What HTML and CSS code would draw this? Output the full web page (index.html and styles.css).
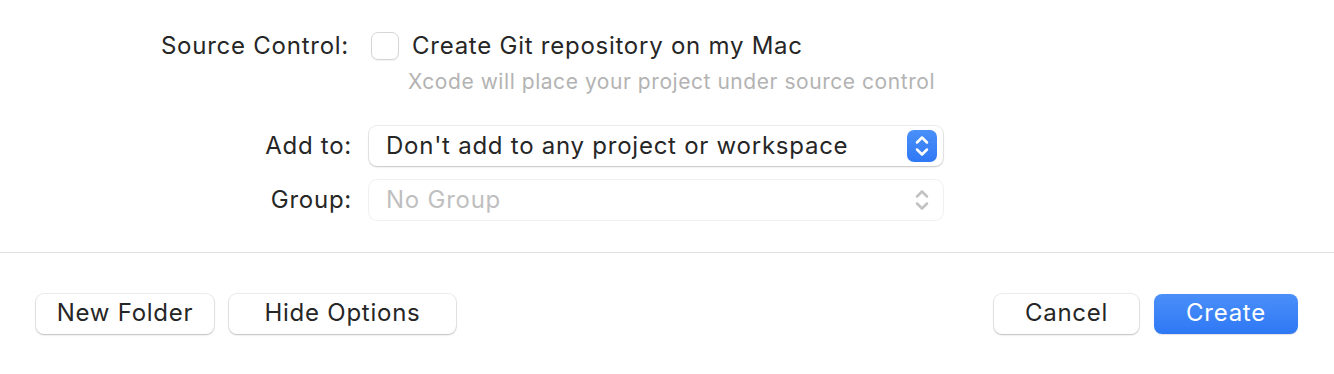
FILE: index.html
```html
<!DOCTYPE html>
<html lang="en">
<head>
<meta charset="utf-8">
<title>New Project Options</title>
<link rel="stylesheet" href="styles.css">
</head>
<body>
<div class="dialog">
  <section class="options">
    <div class="row row-source">
      <div class="label label-source">Source Control:</div>
      <label class="check">
        <span class="checkbox"></span>
        <span class="check-text">Create Git repository on my Mac</span>
      </label>
    </div>
    <div class="row row-hint">
      <div class="label"></div>
      <div class="hint">Xcode will place your project under source control</div>
    </div>
    <div class="row row-add">
      <div class="label">Add to:</div>
      <div class="popup">
        <span class="popup-text">Don't add to any project or workspace</span>
        <span class="stepper stepper-active">
          <svg width="14" height="24" viewBox="0 0 14 24"><path d="M2 8.5 L7 3.5 L12 8.5 M2 15.5 L7 20.5 L12 15.5" fill="none" stroke="#fff" stroke-width="2.5" stroke-linecap="round" stroke-linejoin="round"/></svg>
        </span>
      </div>
    </div>
    <div class="row row-group">
      <div class="label">Group:</div>
      <div class="popup popup-disabled">
        <span class="popup-text">No Group</span>
        <span class="stepper">
          <svg width="14" height="24" viewBox="0 0 14 24"><path d="M2 8.5 L7 3.5 L12 8.5 M2 15.5 L7 20.5 L12 15.5" fill="none" stroke="#c2c2c2" stroke-width="2.5" stroke-linecap="round" stroke-linejoin="round"/></svg>
        </span>
      </div>
    </div>
  </section>
  <div class="separator"></div>
  <footer class="actions">
    <div class="btn-group">
      <button class="btn btn-folder">New Folder</button>
      <button class="btn btn-options">Hide Options</button>
    </div>
    <div class="btn-group">
      <button class="btn btn-cancel">Cancel</button>
      <button class="btn btn-primary">Create</button>
    </div>
  </footer>
</div>
</body>
</html>
```

FILE: styles.css
```css
html, body {
  margin: 0;
  padding: 0;
  background: #ffffff;
}

body {
  font-family: Inter, "Noto Sans", "Liberation Sans", sans-serif;
  font-size: 24px;
  letter-spacing: 0.75px;
  color: #262626;
  width: 1334px;
  height: 374px;
  overflow: hidden;
}

.dialog {
  display: flex;
  flex-direction: column;
}

.options {
  padding-top: 32px;
  display: flex;
  flex-direction: column;
}

.row {
  display: grid;
  grid-template-columns: 352px 574px;
  column-gap: 17px;
  align-items: center;
}

.label {
  text-align: right;
  line-height: 28px;
}

.label-source {
  padding-right: 3px;
}

.check {
  display: flex;
  align-items: center;
  gap: 13px;
  margin-left: 2px;
}

.checkbox {
  width: 28px;
  height: 28px;
  box-sizing: border-box;
  border-radius: 7px;
  background: #fff;
  border: 1px solid #d6d6d6;
  box-shadow: 0 1px 1px rgba(0, 0, 0, 0.06);
}

.check-text {
  line-height: 28px;
}

.row-hint {
  margin-top: 9px;
}

.hint {
  font-size: 21px;
  letter-spacing: 0.55px;
  line-height: 26px;
  color: #b3b3b3;
  padding-left: 39px;
  white-space: nowrap;
}

.row-add {
  margin-top: 31px;
}

.row-group {
  margin-top: 14px;
}

.popup {
  height: 40px;
  box-sizing: border-box;
  border-radius: 8px;
  background: #fff;
  box-shadow: 0 0 0 1px rgba(0, 0, 0, 0.07), 0 1px 2px rgba(0, 0, 0, 0.18);
  display: flex;
  align-items: center;
  justify-content: space-between;
  padding: 0 6px 0 17px;
}

.popup-text {
  line-height: 28px;
}

.stepper {
  width: 30px;
  height: 32px;
  border-radius: 7px;
  display: flex;
  align-items: center;
  justify-content: center;
}

.stepper-active {
  background: linear-gradient(#4a90f9, #2f78f5);
}

.popup-disabled {
  box-shadow: 0 0 0 1px rgba(0, 0, 0, 0.06);
}

.popup-disabled .popup-text {
  color: #bfbfbf;
}

.separator {
  margin-top: 32px;
  height: 1px;
  background: #e2e2e2;
}

.actions {
  display: flex;
  justify-content: space-between;
  padding: 41px 36px 0 36px;
}

.btn-group {
  display: flex;
  gap: 15px;
}

.btn {
  font-family: inherit;
  font-size: 24px;
  letter-spacing: 0.75px;
  color: #262626;
  height: 40px;
  border: none;
  border-radius: 8px;
  background: #fff;
  box-shadow: 0 0 0 1px rgba(0, 0, 0, 0.07), 0 1px 2px rgba(0, 0, 0, 0.2);
  padding: 0 0 3px 0;
  margin: 0;
}

.btn-folder { width: 178px; }
.btn-options { width: 227px; }
.btn-cancel { width: 145px; }

.btn-primary {
  width: 144px;
  color: #fff;
  background: linear-gradient(#4a8ff9, #2f78f5);
  box-shadow: 0 1px 1px rgba(0, 0, 0, 0.12);
}
```
